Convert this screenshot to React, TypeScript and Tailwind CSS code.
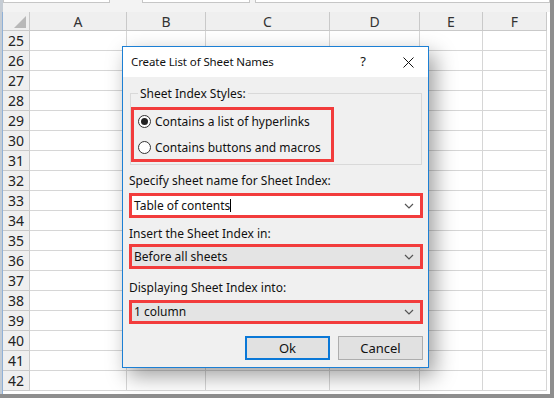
import React from "react";

const columns = [
  { label: "", w: "w-[27px]" },
  { label: "A", w: "w-[97px]" },
  { label: "B", w: "w-[79px]" },
  { label: "C", w: "w-[124px]" },
  { label: "D", w: "w-[90px]" },
  { label: "E", w: "w-[63px]" },
  { label: "F", w: "w-[64px]" },
];

const rows = Array.from({ length: 18 }, (_, i) => 25 + i);

function Chevron() {
  return (
    <svg width="10" height="6" viewBox="0 0 10 6" className="shrink-0">
      <polyline points="1,1 5,5 9,1" fill="none" stroke="#555" strokeWidth="1.2" />
    </svg>
  );
}

function Radio({ checked, label }: { checked: boolean; label: string }) {
  return (
    <div className="h-[21px] flex items-center gap-[4px] pl-[4px]">
      <span className="w-[13px] h-[13px] rounded-full border border-[#333] bg-white flex items-center justify-center">
        {checked && <span className="w-[7px] h-[7px] rounded-full bg-[#222]" />}
      </span>
      <span>{label}</span>
    </div>
  );
}

function Dialog() {
  return (
    <div className="absolute left-[122px] top-[46px] w-[307px] h-[322px] border border-[#1c7fd4] bg-[#f0f0f0] shadow-[6px_8px_20px_rgba(0,0,0,0.38)] flex flex-col font-['Noto_Sans',sans-serif] text-[12px] text-[#111]">
      {/* barra de título */}
      <div className="h-[30px] bg-white flex items-center pl-[8px] pr-[14px]">
        <span className="flex-1 text-[11.5px] tracking-[-0.1px]">Create List of Sheet Names</span>
        <span className="mr-[37px] text-[13px]">?</span>
        <svg width="11" height="11" viewBox="0 0 11 11">
          <path d="M0.5 0.5 L10.5 10.5 M10.5 0.5 L0.5 10.5" stroke="#111" strokeWidth="1" />
        </svg>
      </div>

      <div className="flex flex-col pl-[6px] pr-[5px] leading-[16px]">
        <fieldset className="mt-[9px] mx-[1px] border border-[#d9d9d9] pb-[2px]">
          <legend className="ml-[7px] px-[2px] leading-[15px]">Sheet Index Styles:</legend>
          <div className="mt-[6px] w-[203px] h-[55px] border-[3px] border-[#f23c3c] flex flex-col gap-[5px] pt-[1px]">
            <Radio checked label="Contains a list of hyperlinks" />
            <Radio checked={false} label="Contains buttons and macros" />
          </div>
        </fieldset>

        <div className="mt-[8px]">Specify sheet name for Sheet Index:</div>
        <div className="mt-[4px] h-[25px] border-[3px] border-[#f23c3c] bg-white flex items-center pl-[2px] pr-[6px]">
          <span className="flex-1 flex items-center">
            Table of contents
            <span className="w-[1px] h-[13px] bg-black" />
          </span>
          <Chevron />
        </div>

        <div className="mt-[8px]">Insert the Sheet Index in:</div>
        <div className="mt-[2px] h-[25px] border-[3px] border-[#f23c3c] bg-[#e4e4e4] flex items-center pl-[2px] pr-[6px]">
          <span className="flex-1">Before all sheets</span>
          <Chevron />
        </div>

        <div className="mt-[11px]">Displaying Sheet Index into:</div>
        <div className="mt-[4px] h-[24px] border-[3px] border-[#f23c3c] bg-[#e4e4e4] flex items-center pl-[2px] pr-[6px]">
          <span className="flex-1">1 column</span>
          <Chevron />
        </div>

        <div className="mt-[12px] flex justify-end gap-[8px]">
          <button className="w-[85px] h-[24px] border-2 border-[#0a78d7] bg-[#e1e1e1] text-[13px]">Ok</button>
          <button className="w-[85px] h-[24px] border border-[#adadad] bg-[#e1e1e1] text-[13px]">Cancel</button>
        </div>
      </div>
    </div>
  );
}

export default function App() {
  return (
    <div className="w-[554px] h-[398px] bg-[#8e8e8e] overflow-hidden relative">
      <div className="w-[550px] h-[394px] bg-white flex flex-col font-['Noto_Sans',sans-serif]">
        {/* faixa superior (barra de fórmulas) */}
        <div className="h-[12px] bg-[#f3f3f3] flex items-start">
          <div className="w-[3px] h-full bg-[#c5ccd4]" />
          <div className="w-[107px] h-[3px] bg-white border border-t-0 border-[#c6c6c6]" />
          <div className="w-[32px]" />
          <div className="w-[108px] h-[3px] bg-white border border-t-0 border-[#c6c6c6]" />
          <div className="w-[5px]" />
          <div className="flex-1 h-[3px] bg-white border border-t-0 border-[#c6c6c6]" />
        </div>

        <div className="flex flex-1">
          <div className="w-[3px] bg-[#c5ccd4] border-r border-[#8fb0d6]" />
          <div className="flex flex-col">
            {/* cabeçalho das colunas */}
            <div className="flex h-[19px] bg-[#efefef] text-[14px] text-[#333]">
              {columns.map((c, i) => (
                <div
                  key={i}
                  className={`${c.w} h-full border-r border-b border-[#c9c9c9] flex items-center justify-center ${i === 0 ? "relative" : ""}`}
                >
                  {i === 0 ? (
                    <svg width="12" height="12" viewBox="0 0 12 12" className="absolute right-[3px] bottom-[2px]">
                      <polygon points="12,0 12,12 0,12" fill="#b8b8b8" />
                    </svg>
                  ) : (
                    c.label
                  )}
                </div>
              ))}
            </div>
            {rows.map((r) => (
              <div key={r} className="flex h-[20px]">
                {columns.map((c, i) =>
                  i === 0 ? (
                    <div
                      key={i}
                      className={`${c.w} h-full bg-[#efefef] border-r border-b border-[#c9c9c9] flex items-center justify-center text-[14px] text-[#222]`}
                    >
                      {r}
                    </div>
                  ) : (
                    <div key={i} className={`${c.w} h-full border-r border-b border-[#d6d6d6]`} />
                  )
                )}
              </div>
            ))}
          </div>
        </div>
      </div>
      <Dialog />
    </div>
  );
}
